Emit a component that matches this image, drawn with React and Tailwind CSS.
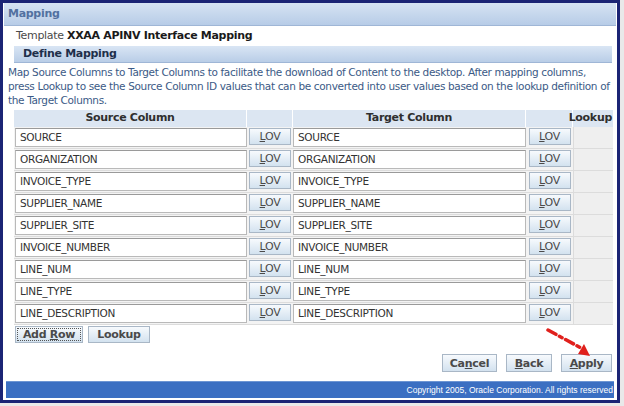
const rows = [
  'SOURCE',
  'ORGANIZATION',
  'INVOICE_TYPE',
  'SUPPLIER_NAME',
  'SUPPLIER_SITE',
  'INVOICE_NUMBER',
  'LINE_NUM',
  'LINE_TYPE',
  'LINE_DESCRIPTION',
];

const font = { fontFamily: '"DejaVu Sans", Verdana, sans-serif' };

const Btn = ({ children, className = '' }) => (
  <button
    className={`border border-[#a9b7c6] bg-gradient-to-b from-[#f7fafd] to-[#d3e2ef] text-[#4a4a4a] leading-none ${className}`}
  >
    {children}
  </button>
);

const Lov = () => (
  <Btn className="w-[42px] h-[17px] text-[11px] tracking-[-0.3px]">
    <span className="underline">L</span>OV
  </Btn>
);

const Field = ({ value }) => (
  <div className="h-[19px] border border-[#b9b9b9] border-t-[#9a9a9a] bg-white pl-[4px] flex items-center text-[10.5px] text-[#333] tracking-[-0.3px]">
    {value}
  </div>
);

export default function App() {
  return (
    <div className="w-[624px] h-[406px] bg-[#e9e9e9] relative" style={font}>
      <div className="w-[620px] h-[403px] border-[3px] border-[#1b2475] bg-white flex flex-col">
        <div className="mx-[1px] h-[23px] bg-gradient-to-b from-[#d6e3f3] to-[#b7cce7] border-b border-[#9fb6d6] flex items-center pl-[4px] text-[11px] font-bold text-[#5271a0] tracking-[-0.3px]">
          Mapping
        </div>
        <div className="pl-[13px] h-[20px] flex items-center text-[11px] tracking-[-0.3px] text-[#4a4a4a]">
          Template&nbsp;<span className="font-bold text-[#1a1a1a]">XXAA APINV Interface Mapping</span>
        </div>
        <div className="ml-[11px] mr-[5px] h-[17px] bg-gradient-to-b from-[#d9e5f4] to-[#b9cde7] border-b border-[#9fb6d6] flex items-center pl-[9px] text-[11px] font-bold text-[#1e2f4a] tracking-[-0.3px]">
          Define Mapping
        </div>
        <div className="pl-[5px] pr-[4px] pt-[2px] text-[10.5px] leading-[14px] text-[#3b5a86] tracking-[-0.35px]">
          Map Source Columns to Target Columns to facilitate the download of Content to the desktop. After mapping columns,
          press Lookup to see the Source Column ID values that can be converted into user values based on the lookup definition of
          the Target Columns.
        </div>
        <div className="ml-[11px] w-[599px] mt-[3px]">
          <div className="grid grid-cols-[233px_46px_233px_47px_40px] h-[17px] bg-[#dce6f2] text-[11px] font-bold text-[#2f2f2f] tracking-[-0.3px]">
            <div className="flex items-center justify-center border-r border-white">Source Column</div>
            <div className="border-r border-white" />
            <div className="flex items-center justify-center border-r border-white">Target Column</div>
            <div className="border-r border-white" />
            <div className="flex items-center justify-end pr-[1px]">Lookup</div>
          </div>
          {rows.map((r) => (
            <div
              key={r}
              className="grid grid-cols-[233px_46px_233px_47px_40px] h-[22px] bg-[#f3f3f3] border-b border-[#dcdcdc]"
            >
              <div className="pl-[1px] pt-[1px]"><Field value={r} /></div>
              <div className="flex items-start justify-center pt-[1px]"><Lov /></div>
              <div className="pt-[1px]"><Field value={r} /></div>
              <div className="flex items-start justify-center pt-[1px]"><Lov /></div>
              <div className="bg-[#efefef] border-l border-[#dcdcdc]" />
            </div>
          ))}
          <div className="flex gap-[5px] mt-[1px] pl-[1px]">
            <Btn className="w-[68px] h-[17px] text-[11px] font-bold tracking-[-0.3px] outline outline-1 outline-dotted outline-[#555] outline-offset-[-3px]">
              Add <span className="underline">R</span>ow
            </Btn>
            <Btn className="w-[62px] h-[17px] text-[11px] font-bold tracking-[-0.3px]">Lookup</Btn>
          </div>
        </div>
        <div className="flex justify-end gap-[9px] pr-[5px] mt-[11px]">
          <Btn className="w-[55px] h-[18px] text-[11px] font-bold tracking-[-0.3px]">
            Ca<span className="underline">n</span>cel
          </Btn>
          <Btn className="w-[46px] h-[18px] text-[11px] font-bold tracking-[-0.3px]">
            <span className="underline">B</span>ack
          </Btn>
          <Btn className="w-[51px] h-[18px] text-[11px] font-bold tracking-[-0.3px]">
            <span className="underline">A</span>pply
          </Btn>
        </div>
        <div className="mt-auto mx-[3px] mb-[2px] h-[17px] bg-[#3b6fc2] border-t border-[#6d95d3] flex items-center justify-end pr-[1px] text-[8.5px] text-white" style={{ fontFamily: '"Liberation Sans", Arial, sans-serif' }}>
          Copyright 2005, Oracle Corporation. All rights reserved
        </div>
      </div>
      <svg className="absolute left-[546px] top-[326px]" width="48" height="34" viewBox="0 0 48 34">
        <line x1="2" y1="4" x2="35" y2="22" stroke="#e0201c" strokeWidth="3.5" strokeDasharray="9 4 3 4" strokeLinecap="round" />
        <polygon points="44,30 32,28 38,18" fill="#e0201c" />
      </svg>
    </div>
  );
}
